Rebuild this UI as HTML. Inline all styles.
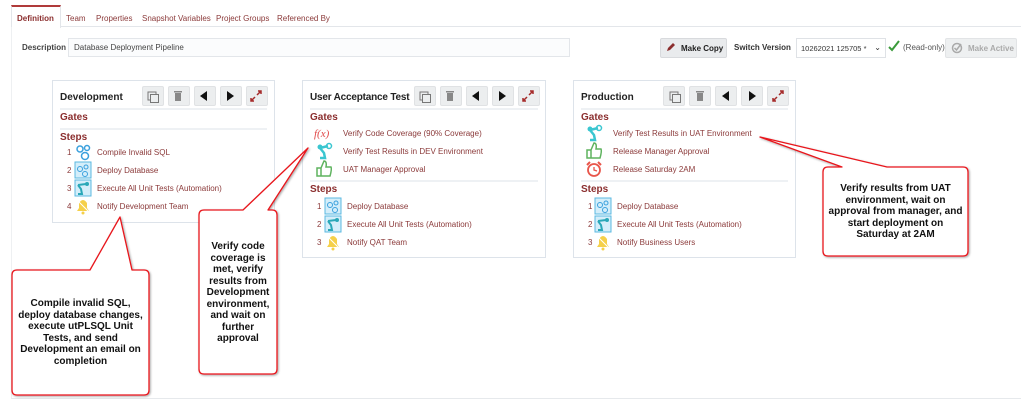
<!DOCTYPE html>
<html><head><meta charset="utf-8"><style>
*{margin:0;padding:0;box-sizing:border-box}
body{width:1024px;height:407px;background:#fff;font-family:"Liberation Sans",sans-serif;position:relative;overflow:hidden;color:#333}
.a{position:absolute;white-space:nowrap}
.tab{font-size:8px;color:#8b3a3a;top:14px}
.lnk{font-size:8px;color:#8b3a3a}
.num{font-size:8px;color:#8b3a3a}
.panel{position:absolute;border:1px solid #dde3ea;background:#fff}
.ttl{font-size:10px;font-weight:bold;color:#222;z-index:2}
.hd{font-size:10px;font-weight:bold;color:#8b2e2e}
.btn{position:absolute;width:22px;height:20px;background:#eceeef;border:1px solid #e0e2e4;border-radius:2px;top:5px}
.hr{position:absolute;height:2px;background:#eef1f4}
.cal{font-size:10.5px;font-weight:bold;color:#111;text-align:center;line-height:11.5px;position:absolute;white-space:normal}
</style></head><body>
<div class="a" style="left:11px;top:5px;width:1010px;height:22px;border-bottom:1px solid #e3e6ea"></div>
<div class="a" style="left:11px;top:5px;width:50px;height:23px;border-top:2px solid #b03a3a;border-left:1px solid #e3e6ea;border-right:1px solid #e3e6ea;background:#fff"></div>
<div class="a tab" style="left:17px;font-weight:bold;color:#8b2e2e">Definition</div>
<div class="a tab" style="left:66px">Team</div>
<div class="a tab" style="left:96px">Properties</div>
<div class="a tab" style="left:142px">Snapshot Variables</div>
<div class="a tab" style="left:216px">Project Groups</div>
<div class="a tab" style="left:277px">Referenced By</div>
<div class="a" style="left:11px;top:27px;width:1010px;height:372px;border-left:1px solid #eef0f2;border-bottom:1px solid #e6e9ec"></div>
<div class="a" style="left:22px;top:43px;font-size:8px;font-weight:bold;color:#444">Description</div>
<div class="a" style="left:68px;top:38px;width:502px;height:19px;border:1px solid #e3e6ea;background:#fbfcfd;font-size:8px;padding:4px 5px;color:#444">Database Deployment Pipeline</div>
<div class="a" style="left:660px;top:38px;width:67px;height:20px;background:#e9ebed;border:1px solid #d8dadd;border-radius:2px;font-size:8px;font-weight:bold;padding:5px 0 0 20px;color:#222">Make Copy</div>
<svg class="a" style="left:665px;top:42px" width="10" height="11"><path d="M2 9 L3 6 L8 1 L10 3 L5 8 Z" fill="#8b2e2e"/></svg>
<div class="a" style="left:734px;top:43px;font-size:8px;font-weight:bold;color:#333">Switch Version</div>
<div class="a" style="left:796px;top:38px;width:90px;height:20px;border:1px solid #dfe2e6;font-size:7.5px;padding:5px 4px;color:#333">10262021 125705 *<span style="position:absolute;right:4px;top:4px;font-size:8px">&#8964;</span></div>
<svg class="a" style="left:888px;top:40px" width="12" height="12"><path d="M1 7 L4 10 L11 1" stroke="#3a9a3a" stroke-width="2" fill="none"/></svg>
<div class="a" style="left:903px;top:43px;font-size:8px;color:#555">(Read-only)</div>
<div class="a" style="left:945px;top:38px;width:72px;height:20px;background:#eef0f1;border:1px solid #e2e4e6;border-radius:2px;font-size:8px;font-weight:bold;color:#aaa;padding:5px 0 0 22px">Make Active</div>
<svg class="a" style="left:951px;top:42px" width="12" height="12"><circle cx="6" cy="6" r="4.5" stroke="#aaa" stroke-width="1.5" fill="none"/><path d="M3.5 6 L5.5 8 L10 2" stroke="#aaa" stroke-width="1.5" fill="none"/></svg>

<div class="panel" style="left:52px;top:80px;width:223px;height:143px">
 <div class="btn" style="left:89px"></div><div class="btn" style="left:115px"></div><div class="btn" style="left:141px"></div><div class="btn" style="left:167px"></div><div class="btn" style="left:193px"></div>
 <div class="a ttl" style="left:7px;top:11px">Development</div>
 <div class="hr" style="left:7px;top:27px;width:207px"></div>
 <div class="a hd" style="left:7px;top:31px">Gates</div>
 <div class="hr" style="left:7px;top:47px;width:207px"></div>
 <div class="a hd" style="left:7px;top:51px">Steps</div>
</div>
<div class="panel" style="left:302px;top:80px;width:244px;height:178px">
 <div class="btn" style="left:111px"></div><div class="btn" style="left:137px"></div><div class="btn" style="left:163px"></div><div class="btn" style="left:189px"></div><div class="btn" style="left:215px"></div>
 <div class="a ttl" style="left:7px;top:11px;letter-spacing:-0.2px">User Acceptance Test</div>
 <div class="hr" style="left:7px;top:27px;width:228px"></div>
 <div class="a hd" style="left:7px;top:31px">Gates</div>
 <div class="hr" style="left:7px;top:99px;width:228px"></div>
 <div class="a hd" style="left:7px;top:103px">Steps</div>
</div>
<div class="panel" style="left:573px;top:80px;width:223px;height:178px">
 <div class="btn" style="left:89px"></div><div class="btn" style="left:115px"></div><div class="btn" style="left:141px"></div><div class="btn" style="left:167px"></div><div class="btn" style="left:193px"></div>
 <div class="a ttl" style="left:7px;top:11px">Production</div>
 <div class="hr" style="left:7px;top:27px;width:207px"></div>
 <div class="a hd" style="left:7px;top:31px">Gates</div>
 <div class="hr" style="left:7px;top:99px;width:207px"></div>
 <div class="a hd" style="left:7px;top:103px">Steps</div>
</div>

<svg class="a" style="left:0;top:0" width="1024" height="407">
 <defs>
  <g id="b1"><rect x="-4" y="-4" width="8" height="8" fill="none" stroke="#777"/><rect x="-1.5" y="-1.5" width="8" height="8" fill="#eceeef" stroke="#777"/></g>
  <g id="b2"><rect x="-3" y="-3" width="6" height="8" fill="#888"/><rect x="-4" y="-5" width="8" height="1.5" fill="#888"/></g>
  <g id="b3"><path d="M3 -5 L-4 0 L3 5 Z" fill="#111"/></g>
  <g id="b4"><path d="M-3 -5 L4 0 L-3 5 Z" fill="#111"/></g>
  <g id="b5"><path d="M1 -1 L5 -5 M2 -5 L5 -5 L5 -2 M-1 1 L-5 5 M-5 2 L-5 5 L-2 5" stroke="#a52a2a" stroke-width="1.5" fill="none"/></g>
  <g id="gear"><circle cx="-3" cy="-3" r="3" fill="none" stroke="#3aa0dd" stroke-width="1.5"/><circle cx="4" cy="-4" r="2.5" fill="none" stroke="#3aa0dd" stroke-width="1.5"/><circle cx="2" cy="4" r="3.5" fill="none" stroke="#3aa0dd" stroke-width="1.5"/></g>
  <g id="db"><rect x="-8" y="-8" width="16" height="16" fill="#d4eefa" stroke="#5bb8e0"/><circle cx="-3" cy="-1" r="2.5" fill="none" stroke="#3aa0dd"/><circle cx="3" cy="-3" r="2" fill="none" stroke="#3aa0dd"/><circle cx="2" cy="4" r="2.5" fill="none" stroke="#3aa0dd"/></g>
  <g id="rob"><rect x="-8" y="-8" width="16" height="16" fill="#d4eefa" stroke="#5bb8e0"/><path d="M-5 6 L-1 6 L-2 1 L-5 -3 M-5 -3 L3 -4" stroke="#2aa8b8" stroke-width="2" fill="none"/><circle cx="4" cy="-4" r="2" fill="#2aa8b8"/></g>
  <g id="bell"><path d="M-6 5 L-4 2 L-4 -3 Q0 -9 4 -3 L4 2 L6 5 Z" fill="#f5d04a"/><circle cx="0" cy="7" r="1.5" fill="#f5d04a"/><path d="M-7 -7 L7 7" stroke="#fff" stroke-width="1"/></g>
  <g id="arm"><path d="M-4 7 L1 7 L0 2 L-4 -3 M-4 -3 L4 -5" stroke="#3ac6d0" stroke-width="2.5" fill="none"/><circle cx="-4" cy="-4" r="2.5" fill="#3ac6d0"/><circle cx="5" cy="-5" r="2.5" fill="none" stroke="#3ac6d0" stroke-width="1.5"/></g>
  <g id="thumb"><path d="M-7 -1 L-3 -1 L-3 7 L-7 7 Z M-3 -1 L0 -8 Q3 -8 2 -2 L7 -2 Q8 0 6 7 L-3 7" fill="none" stroke="#5fb35f" stroke-width="1.5"/></g>
  <g id="clock"><circle cx="0" cy="1" r="6" fill="none" stroke="#e8554a" stroke-width="1.8"/><path d="M0 -2 L0 1 L3 2" stroke="#e8554a" stroke-width="1.3" fill="none"/><path d="M-7 -4 L-4 -7 M7 -4 L4 -7" stroke="#e8554a" stroke-width="2"/></g>
 </defs>
 <g transform="translate(152,96)"><use href="#b1"/></g><g transform="translate(178,96)"><use href="#b2"/></g><g transform="translate(204,96)"><use href="#b3"/></g><g transform="translate(230,96)"><use href="#b4"/></g><g transform="translate(256,96)"><use href="#b5"/></g>
 <g transform="translate(424,96)"><use href="#b1"/></g><g transform="translate(450,96)"><use href="#b2"/></g><g transform="translate(476,96)"><use href="#b3"/></g><g transform="translate(502,96)"><use href="#b4"/></g><g transform="translate(528,96)"><use href="#b5"/></g>
 <g transform="translate(674,96)"><use href="#b1"/></g><g transform="translate(700,96)"><use href="#b2"/></g><g transform="translate(726,96)"><use href="#b3"/></g><g transform="translate(752,96)"><use href="#b4"/></g><g transform="translate(778,96)"><use href="#b5"/></g>
 <g transform="translate(83,152)"><use href="#gear"/></g>
 <g transform="translate(83,170)"><use href="#db"/></g>
 <g transform="translate(83,188)"><use href="#rob"/></g>
 <g transform="translate(83,206)"><use href="#bell"/></g>
 <text x="314" y="137" font-family="Liberation Serif" font-style="italic" font-size="11" fill="#e04848">f(x)</text>
 <g transform="translate(324,151)"><use href="#arm"/></g>
 <g transform="translate(324,169)"><use href="#thumb"/></g>
 <g transform="translate(333,206)"><use href="#db"/></g>
 <g transform="translate(333,224)"><use href="#rob"/></g>
 <g transform="translate(333,242)"><use href="#bell"/></g>
 <g transform="translate(594,133)"><use href="#arm"/></g>
 <g transform="translate(594,151)"><use href="#thumb"/></g>
 <g transform="translate(594,169)"><use href="#clock"/></g>
 <g transform="translate(603,206)"><use href="#db"/></g>
 <g transform="translate(603,224)"><use href="#rob"/></g>
 <g transform="translate(603,242)"><use href="#bell"/></g>
</svg>

<div class="a num" style="left:67px;top:148px">1</div><div class="a lnk" style="left:97px;top:148px">Compile Invalid SQL</div>
<div class="a num" style="left:67px;top:166px">2</div><div class="a lnk" style="left:97px;top:166px">Deploy Database</div>
<div class="a num" style="left:67px;top:184px">3</div><div class="a lnk" style="left:97px;top:184px">Execute All Unit Tests (Automation)</div>
<div class="a num" style="left:67px;top:202px">4</div><div class="a lnk" style="left:97px;top:202px">Notify Development Team</div>

<div class="a lnk" style="left:343px;top:129px">Verify Code Coverage (90% Coverage)</div>
<div class="a lnk" style="left:343px;top:147px">Verify Test Results in DEV Environment</div>
<div class="a lnk" style="left:343px;top:165px">UAT Manager Approval</div>
<div class="a num" style="left:317px;top:202px">1</div><div class="a lnk" style="left:347px;top:202px">Deploy Database</div>
<div class="a num" style="left:317px;top:220px">2</div><div class="a lnk" style="left:347px;top:220px">Execute All Unit Tests (Automation)</div>
<div class="a num" style="left:317px;top:238px">3</div><div class="a lnk" style="left:347px;top:238px">Notify QAT Team</div>

<div class="a lnk" style="left:613px;top:129px">Verify Test Results in UAT Environment</div>
<div class="a lnk" style="left:613px;top:147px">Release Manager Approval</div>
<div class="a lnk" style="left:613px;top:165px">Release Saturday 2AM</div>
<div class="a num" style="left:588px;top:202px">1</div><div class="a lnk" style="left:617px;top:202px">Deploy Database</div>
<div class="a num" style="left:588px;top:220px">2</div><div class="a lnk" style="left:617px;top:220px">Execute All Unit Tests (Automation)</div>
<div class="a num" style="left:588px;top:238px">3</div><div class="a lnk" style="left:617px;top:238px">Notify Business Users</div>

<svg class="a" style="left:0;top:0" width="1024" height="407">
 <defs><filter id="sh"><feDropShadow dx="1" dy="1" stdDeviation="1" flood-color="#000" flood-opacity="0.35"/></filter></defs>
 <g filter="url(#sh)" fill="#fff" stroke="#e8151b" stroke-width="1.3" stroke-linejoin="round">
  <path d="M17 270 L90 270 L120 217 L132 270 L144 270 Q149 270 149 275 L149 390 Q149 395 144 395 L17 395 Q12 395 12 390 L12 275 Q12 270 17 270 Z"/>
  <path d="M204 210 L243 210 L308 148 L268 210 L272 210 Q277 210 277 215 L277 369 Q277 374 272 374 L204 374 Q199 374 199 369 L199 215 Q199 210 204 210 Z"/>
  <path d="M828 167 L842 167 L760 137 L887 167 L963 167 Q968 167 968 172 L968 251 Q968 256 963 256 L828 256 Q823 256 823 251 L823 172 Q823 167 828 167 Z"/>
 </g>
</svg>
<div class="cal" style="left:16px;top:298px;width:129px;font-size:10px">Compile invalid SQL, deploy database changes, execute utPLSQL Unit Tests, and send Development an email on completion</div>
<div class="cal" style="left:201px;top:241px;width:74px;font-size:10px">Verify code coverage is met, verify results from Development environment, and wait on further approval</div>
<div class="cal" style="left:827px;top:183px;width:137px;font-size:10px">Verify results from UAT environment, wait on approval from manager, and start deployment on Saturday at 2AM</div>
</body></html>
